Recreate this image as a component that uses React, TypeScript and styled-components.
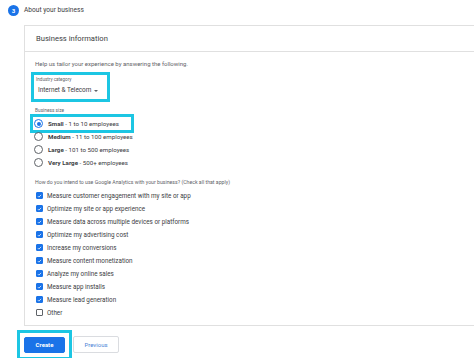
import React from 'react';
import styled, { createGlobalStyle } from 'styled-components';

const GlobalStyle = createGlobalStyle`
	html, body {
		margin: 0;
		padding: 0;
		background: #ffffff;
		overflow: hidden;
		font-family: Roboto, 'Liberation Sans', sans-serif;
		color: #3c4043;
	}
`;

const Page = styled.div`
	width: 474px;
	height: 358px;
	padding: 5px 0 0 8px;
	box-sizing: border-box;
`;

const StepRow = styled.div`
	display: flex;
	align-items: center;
	gap: 5px;
	height: 10px;
`;

const StepBadge = styled.div`
	width: 11px;
	height: 11px;
	border-radius: 50%;
	background: #1a73e8;
	color: #ffffff;
	font-size: 6px;
	font-weight: 700;
	display: flex;
	align-items: center;
	justify-content: center;
`;

const StepTitle = styled.span`
	font-size: 6.6px;
	color: #3c4043;
`;

const Card = styled.section`
	margin: 10px 0 0 16px;
	width: 450px;
	box-sizing: border-box;
	border: 1px solid #e0e0e0;
	border-right: none;
	background: #ffffff;
`;

const CardHeader = styled.header`
	height: 25px;
	display: flex;
	align-items: center;
	padding-left: 11px;
	border-bottom: 1px solid #e0e0e0;
	font-size: 7.6px;
	color: #3c4043;
`;

const CardBody = styled.div`
	padding: 6px 0 6px 10px;
	display: flex;
	flex-direction: column;
	align-items: flex-start;
`;

const Text = styled.div<{ $size: number; $h: number; $mt?: number; $color?: string }>`
	font-size: ${({ $size }) => $size}px;
	line-height: ${({ $h }) => $h}px;
	height: ${({ $h }) => $h}px;
	margin-top: ${({ $mt }) => $mt ?? 0}px;
	color: ${({ $color }) => $color ?? '#5f6368'};
	white-space: nowrap;
`;

const Highlight = styled.div<{ $w: number }>`
	outline: 3px solid #1cc6e3;
	width: ${({ $w }) => $w}px;
	box-sizing: border-box;
`;

const SelectBlock = styled.div`
	margin: 5px 0 0 -1px;
	padding-left: 2px;
	height: 24px;
	display: flex;
	flex-direction: column;
`;

const SelectValue = styled.div`
	font-size: 6.4px;
	line-height: 13px;
	padding-left: 2px;
	color: #3c4043;
	display: flex;
	align-items: center;
	gap: 3px;
`;

const Caret = styled.span`
	width: 0;
	height: 0;
	border-left: 2px solid transparent;
	border-right: 2px solid transparent;
	border-top: 2px solid #5f6368;
`;

const OptionList = styled.div`
	display: flex;
	flex-direction: column;
	margin-left: -2px;
`;

const RadioRow = styled.div`
	height: 13px;
	display: flex;
	align-items: center;
	gap: 5px;
	padding-left: 1px;
	font-size: 6.2px;
	color: #3c4043;
	white-space: nowrap;

	b {
		font-weight: 700;
	}
`;

const Radio = styled.span<{ $on?: boolean }>`
	width: 9px;
	height: 9px;
	box-sizing: border-box;
	border-radius: 50%;
	border: 1px solid ${({ $on }) => ($on ? '#1a73e8' : '#5f6368')};
	display: flex;
	align-items: center;
	justify-content: center;

	&::after {
		content: '';
		width: 4px;
		height: 4px;
		border-radius: 50%;
		background: ${({ $on }) => ($on ? '#1a73e8' : 'transparent')};
	}
`;

const CheckRow = styled.div`
	height: 13px;
	display: flex;
	align-items: center;
	gap: 4px;
	padding-left: 1px;
	font-size: 6.3px;
	color: #3c4043;
	white-space: nowrap;
`;

const Box = styled.span<{ $on?: boolean }>`
	width: 7px;
	height: 7px;
	box-sizing: border-box;
	border-radius: 1px;
	border: 1px solid ${({ $on }) => ($on ? '#1a73e8' : '#5f6368')};
	background: ${({ $on }) => ($on ? '#1a73e8' : '#ffffff')};
	display: flex;
	align-items: center;
	justify-content: center;
`;

const Actions = styled.div`
	display: flex;
	align-items: center;
	gap: 8px;
	margin: 10px 0 0 16px;
`;

const CreateWrap = styled.div`
	outline: 3px solid #1cc6e3;
	outline-offset: 4px;
	display: flex;
`;

const Button = styled.button<{ $primary?: boolean }>`
	font-family: inherit;
	font-size: 6px;
	height: ${({ $primary }) => ($primary ? 16 : 17)}px;
	width: ${({ $primary }) => ($primary ? 41 : 46)}px;
	padding: 0;
	border-radius: 2px;
	cursor: pointer;
	font-weight: ${({ $primary }) => ($primary ? 700 : 400)};
	background: ${({ $primary }) => ($primary ? '#1a73e8' : '#ffffff')};
	color: ${({ $primary }) => ($primary ? '#ffffff' : '#4a7fd6')};
	border: 1px solid ${({ $primary }) => ($primary ? '#1a73e8' : '#dadce0')};
`;

const sizes = [
	{ name: 'Small', range: '1 to 10 employees' },
	{ name: 'Medium', range: '11 to 100 employees' },
	{ name: 'Large', range: '101 to 500 employees' },
	{ name: 'Very Large', range: '500+ employees' },
];

const uses = [
	'Measure customer engagement with my site or app',
	'Optimize my site or app experience',
	'Measure data across multiple devices or platforms',
	'Optimize my advertising cost',
	'Increase my conversions',
	'Measure content monetization',
	'Analyze my online sales',
	'Measure app installs',
	'Measure lead generation',
	'Other',
];

const Check = () => (
	<svg width="6" height="6" viewBox="0 0 24 24">
		<path d="M4 12.5l5 5L20 6.5" fill="none" stroke="#ffffff" strokeWidth="3.5" />
	</svg>
);

export default function App() {
	return (
		<Page>
			<GlobalStyle />
			<StepRow>
				<StepBadge>3</StepBadge>
				<StepTitle>About your business</StepTitle>
			</StepRow>
			<Card>
				<CardHeader>Business information</CardHeader>
				<CardBody>
					<Text $size={6} $h={12}>
						Help us tailor your experience by answering the following.
					</Text>
					<Highlight as={SelectBlock} $w={73}>
						<Text $size={4.6} $h={9} $color="#5f6368">
							Industry category
						</Text>
						<SelectValue>
							Internet &amp; Telecom <Caret />
						</SelectValue>
					</Highlight>
					<Text $size={4.8} $h={12} $mt={6}>
						Business size
					</Text>
					<OptionList>
						{sizes.map((s, i) => {
							const row = (
								<RadioRow key={s.name}>
									<Radio $on={i === 0} />
									<span>
										<b>{s.name}</b> - {s.range}
									</span>
								</RadioRow>
							);
							return i === 0 ? (
								<Highlight key={s.name} $w={98}>
									{row}
								</Highlight>
							) : (
								row
							);
						})}
					</OptionList>
					<Text $size={5.2} $h={13} $mt={7}>
						How do you intend to use Google Analytics with your business? (Check all that apply)
					</Text>
					{uses.map((u, i) => (
						<CheckRow key={u}>
							<Box $on={i < 9}>{i < 9 && <Check />}</Box>
							{u}
						</CheckRow>
					))}
				</CardBody>
			</Card>
			<Actions>
				<CreateWrap>
					<Button $primary>Create</Button>
				</CreateWrap>
				<Button>Previous</Button>
			</Actions>
		</Page>
	);
}
